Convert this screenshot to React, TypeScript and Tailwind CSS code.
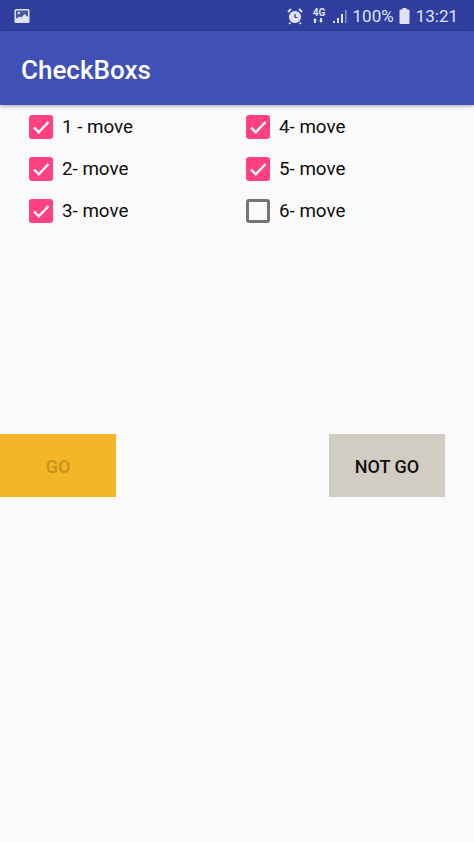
const items = [
  [
    { label: "1 - move", checked: true },
    { label: "2- move", checked: true },
    { label: "3- move", checked: true },
  ],
  [
    { label: "4- move", checked: true },
    { label: "5- move", checked: true },
    { label: "6- move", checked: false },
  ],
];

const CheckBox = ({ label, checked }: { label: string; checked: boolean }) => (
  <div className="flex h-[42px] items-center">
    {checked ? (
      <div className="flex h-6 w-6 items-center justify-center rounded-[3px] bg-[#ff4081]">
        <svg viewBox="0 0 24 24" className="h-6 w-6" fill="none" stroke="#fff" strokeWidth="2.4">
          <path d="M5 12.5l4.8 4.8L19.5 7" />
        </svg>
      </div>
    ) : (
      <div className="h-6 w-6 rounded-[3px] border-[3px] border-[#757575]" />
    )}
    <span className="ml-[9px] text-[18.8px] leading-6 text-[#0c0c0c]">{label}</span>
  </div>
);

export default function App() {
  return (
    <div className="flex h-[842px] w-[474px] flex-col overflow-hidden bg-[#fafafa] font-['Roboto',sans-serif]">
      <div className="flex h-[31px] items-center justify-between bg-[#303f9f] pl-[14px] pr-[16px] text-[#dfe2f1]">
        <svg viewBox="0 0 16 16" className="h-4 w-4">
          <rect x="0.5" y="1" width="15" height="14" rx="1.5" fill="#dfe2f1" />
          <rect x="2" y="2.5" width="12" height="8" fill="#4a57a8" />
          <circle cx="4.8" cy="5" r="1.3" fill="#dfe2f1" />
          <path d="M2 11l3.5-2.5 2 1 3-3.5 3.5 3V13.5H2z" fill="#dfe2f1" />
        </svg>
        <div className="flex items-center">
          <svg viewBox="0 0 18 18" className="h-[18px] w-[18px]" fill="none" stroke="#dfe2f1">
            <circle cx="9" cy="10" r="5.5" fill="#dfe2f1" strokeWidth="1.2" />
            <path d="M2 5l3-3M16 5l-3-3" strokeWidth="2" />
            <path d="M9 7v3.5h2.5" stroke="#303f9f" strokeWidth="1.2" />
            <path d="M4.5 15.5l-1.5 1.5M13.5 15.5l1.5 1.5" strokeWidth="1.5" />
          </svg>
          <div className="ml-[9px] flex w-[13px] flex-col items-center">
            <span className="text-[10px] font-bold leading-[10px]">4G</span>
            <svg viewBox="0 0 12 5" className="h-[5px] w-3" fill="#dfe2f1">
              <path d="M1 5V2.500H0L2 0l2 2.500H3V5zM9 0v2.500h1L8 5 6 2.500h1V0z" />
            </svg>
          </div>
          <svg viewBox="0 0 16 16" className="ml-[6px] h-4 w-4" fill="#dfe2f1">
            <rect x="1" y="13" width="2" height="2" />
            <rect x="5" y="10" width="2" height="5" />
            <rect x="9" y="6" width="2" height="9" />
            <rect x="13" y="2" width="1.5" height="13" opacity="0.5" />
          </svg>
          <span className="ml-[5px] text-[17px] leading-6">100%</span>
          <svg viewBox="0 0 10 16" className="ml-[5px] h-4 w-[11px]" fill="#dfe2f1">
            <path d="M3 0h4v1.500h2a1 1 0 0 1 1 1V15a1 1 0 0 1-1 1H1a1 1 0 0 1-1-1V2.500a1 1 0 0 1 1-1h2z" />
          </svg>
          <span className="ml-[6px] text-[17px] leading-6">13:21</span>
        </div>
      </div>

      <div className="flex h-[74px] items-center bg-[#3f51b5] pl-[21px] pt-[3px] shadow-[0_1px_4px_rgba(0,0,0,0.35)]">
        <h1 className="text-[26px] font-medium leading-8 text-[#fff]">CheckBoxs</h1>
      </div>

      <div className="ml-[29px] mt-[1px] flex">
        {items.map((col, i) => (
          <div key={i} className="w-[217px]">
            {col.map((item) => (
              <CheckBox key={item.label} label={item.label} checked={item.checked} />
            ))}
          </div>
        ))}
      </div>

      <div className="mt-[202px] flex justify-between pr-[29px]">
        <div className="flex h-[63px] w-[116px] items-center justify-center bg-[#f4b526] pt-[2px] text-[18px] font-medium text-[#c4941f]">
          GO
        </div>
        <div className="flex h-[63px] w-[116px] items-center justify-center bg-[#d1cdc2] pt-[2px] text-[18px] font-medium text-[#111]">
          NOT GO
        </div>
      </div>
    </div>
  );
}
